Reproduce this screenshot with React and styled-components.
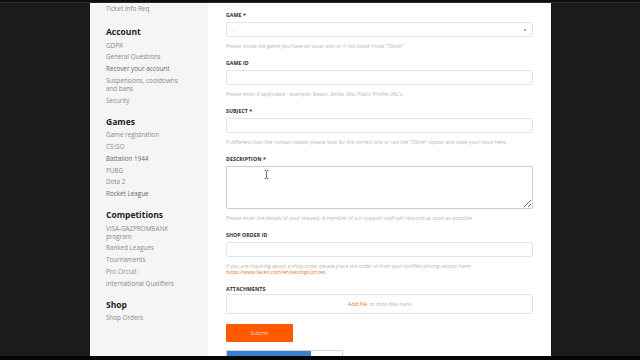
import React from 'react'
import styled, { createGlobalStyle } from 'styled-components'

const GlobalStyle = createGlobalStyle`
  html, body {
    margin: 0;
    padding: 0;
    background: #1b1b1b;
  }
  body {
    font-family: "Open Sans", "Liberation Sans", sans-serif;
  }
`

const Screen = styled.div`
  width: 640px;
  height: 360px;
  display: flex;
  flex-direction: column;
  background: #1b1b1b;
  overflow: hidden;
`

const TopBar = styled.div`
  height: 3px;
  background: #0e0e0f;
  border-bottom: 1px solid #2a2a2c;
  box-sizing: border-box;
  flex-shrink: 0;
`

const BottomBar = styled.div`
  height: 4px;
  background: #050505;
  flex-shrink: 0;
`

const Viewport = styled.div`
  flex: 1;
  display: flex;
  padding-left: 90px;
  overflow: hidden;
`

const Page = styled.div`
  width: 461px;
  display: flex;
  background: #fff;
`

const Sidebar = styled.nav`
  width: 118px;
  box-sizing: border-box;
  padding: 2px 0 0 16px;
  background: #f5f5f5;
`

const Section = styled.div`
  margin-bottom: 11px;

  &:first-child {
    margin-bottom: 13px;
  }
`

const Heading = styled.h3`
  margin: 0 0 4.5px;
  font-size: 8.5px;
  line-height: 11px;
  font-weight: 700;
  color: #1e1e1e;
`

const NavItem = styled.div`
  font-size: 6.3px;
  line-height: 8px;
  margin-bottom: 3.8px;
  color: ${({ $dark }) => ($dark ? '#666' : '#8a8a8a')};
  width: 84px;
`

const Main = styled.main`
  flex: 1;
  padding: 8px 18px 0;
`

const Field = styled.div`
  margin-bottom: 10px;
`

const Label = styled.div`
  font-size: 5.2px;
  line-height: 8px;
  font-weight: 700;
  color: #2a2a2a;
  letter-spacing: 0.1px;
  margin-bottom: ${({ $tight }) => ($tight ? 1 : 3)}px;
`

const Box = styled.div`
  position: relative;
  box-sizing: border-box;
  height: ${({ $h }) => $h || 15}px;
  border: 1px solid #e4e4e4;
  border-radius: 2px;
  background: #fff;
  display: flex;
  align-items: center;
  justify-content: ${({ $center }) => ($center ? 'center' : 'space-between')};
  padding: 0 6px;
  font-size: 5px;
  color: #999;
`

const TextArea = styled.textarea`
  display: block;
  width: 100%;
  height: 43px;
  box-sizing: border-box;
  border: 1px solid #cfcfcf;
  border-radius: 2px;
  resize: vertical;
  margin: 0;
  padding: 0;
  background: #fff;
`

const AreaWrap = styled.div`
  position: relative;
`

const Cursor = styled.svg`
  position: absolute;
  left: 38px;
  top: 4px;
`

const Arrow = styled.span`
  width: 2px;
  height: 2px;
  background: #aaa;
`

const Help = styled.div`
  margin-top: 6px;
  font-size: 5.1px;
  line-height: 6px;
  color: #b5b5b5;
`

const Link = styled.div`
  color: #e0752e;
`

const AddFile = styled.span`
  color: #e0752e;
  font-size: 5.6px;
`

const Drop = styled.span`
  color: #b5b5b5;
  font-size: 5.2px;
  margin-left: 2px;
`

const Actions = styled.div`
  margin-top: 2px;
  display: flex;
  flex-direction: column;
  align-items: flex-start;
  gap: 8px;
`

const Submit = styled.button`
  width: 67px;
  height: 18px;
  border: none;
  border-radius: 1px;
  background: #ff5a00;
  color: #ffd9c2;
  font-family: inherit;
  font-size: 5.5px;
  padding: 0;
`

const Widget = styled.div`
  width: 117px;
  height: 10px;
  box-sizing: border-box;
  border: 1px solid #d4d4d4;
  display: flex;
`

const WidgetBar = styled.div`
  width: 84px;
  background: #3f7fd0;
`

const sections = [
  {
    title: 'Account',
    items: ['GDPR', 'General Questions', ['Recover your account', true], 'Suspensions, cooldowns and bans', 'Security'],
  },
  {
    title: 'Games',
    items: ['Game registration', 'CS:GO', ['Battalion 1944', true], 'PUBG', 'Dota 2', ['Rocket League', true]],
  },
  {
    title: 'Competitions',
    items: ['VISA-GAZPROMBANK program', 'Ranked Leagues', 'Tournaments', 'Pro Circuit', 'International Qualifiers'],
  },
  { title: 'Shop', items: ['Shop Orders'] },
]

const App = () => (
  <Screen>
    <GlobalStyle />
    <TopBar />
    <Viewport>
      <Page>
        <Sidebar>
          <Section>
            <NavItem>Ticket Info Req</NavItem>
          </Section>
          {sections.map((s) => (
            <Section key={s.title}>
              <Heading>{s.title}</Heading>
              {s.items.map((it) => {
                const [text, dark] = Array.isArray(it) ? it : [it, false]
                return (
                  <NavItem key={text} $dark={dark}>
                    {text}
                  </NavItem>
                )
              })}
            </Section>
          ))}
        </Sidebar>
        <Main>
          <Field>
            <Label>GAME *</Label>
            <Box>
              <span>-</span>
              <Arrow />
            </Box>
            <Help>Please chose the game you have an issue with or if not listed chose "Other"</Help>
          </Field>
          <Field>
            <Label>GAME ID</Label>
            <Box />
            <Help>Please enter if applicable - example: Steam, Smite, Wot Public Profile URL's</Help>
          </Field>
          <Field>
            <Label>SUBJECT *</Label>
            <Box />
            <Help>
              If different than the contact reason please look for the correct one or use the "Other" option and
              state your issue here.
            </Help>
          </Field>
          <Field>
            <Label>DESCRIPTION *</Label>
            <AreaWrap>
              <TextArea readOnly />
              <Cursor width="5" height="9" viewBox="0 0 5 9">
                <path d="M0.5 0.5h1.5M3 0.5h1.5M2.5 1v7M0.5 8.5h1.5M3 8.5h1.5" stroke="#444" strokeWidth="0.8" fill="none" />
              </Cursor>
            </AreaWrap>
            <Help>
              Please enter the details of your request. A member of our support staff will respond as soon as
              possible.
            </Help>
          </Field>
          <Field>
            <Label>SHOP ORDER ID</Label>
            <Box />
            <Help>
              If you are inquiring about a shop order please place the order id from your profiles pricing section
              here:
              <Link>https://www.faceit.com/en/settings/prizes</Link>
            </Help>
          </Field>
          <Field>
            <Label $tight>ATTACHMENTS</Label>
            <Box $h={20} $center>
              <AddFile>Add file</AddFile>
              <Drop>or drop files here</Drop>
            </Box>
          </Field>
          <Actions>
            <Submit>Submit</Submit>
            <Widget>
              <WidgetBar />
            </Widget>
          </Actions>
        </Main>
      </Page>
    </Viewport>
    <BottomBar />
  </Screen>
)

export default App
